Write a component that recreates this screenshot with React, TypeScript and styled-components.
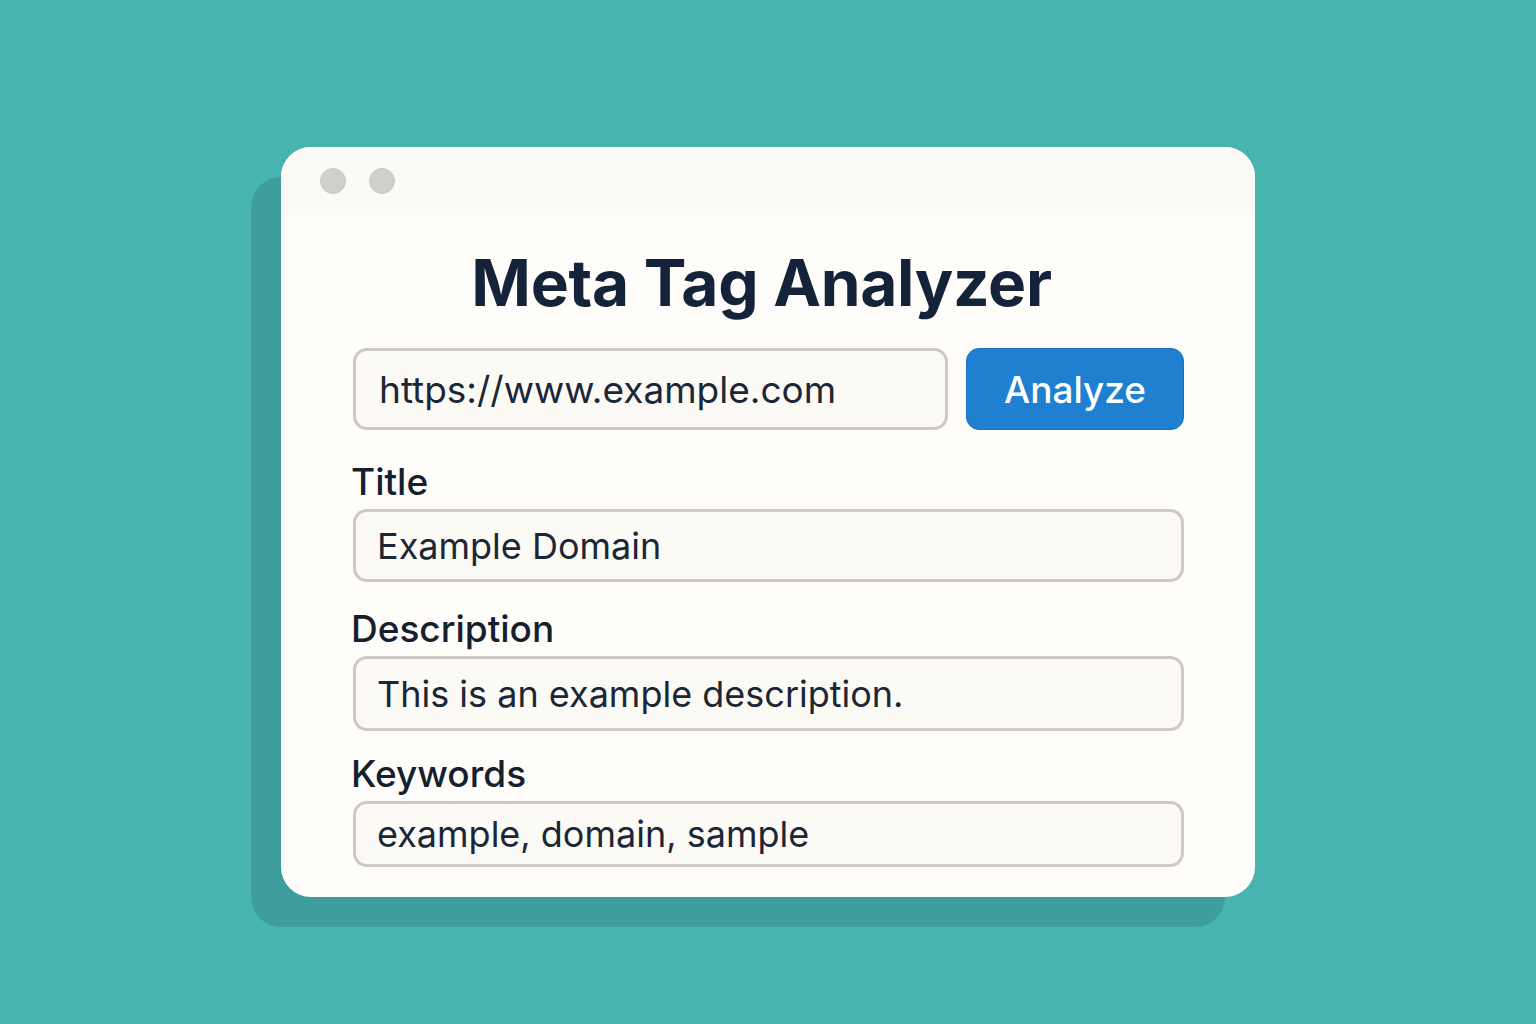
import React from "react";
import styled, { createGlobalStyle } from "styled-components";

const GlobalStyle = createGlobalStyle`
  html, body {
    margin: 0;
    padding: 0;
    background: #48b4b0;
  }
  body {
    font-family: Inter, "Noto Sans", "Liberation Sans", sans-serif;
    color: #15233a;
  }
`;

const Stage = styled.div`
  width: 1536px;
  height: 1024px;
  display: flex;
  justify-content: center;
  padding-top: 147px;
  box-sizing: border-box;
`;

const Window = styled.div`
  width: 974px;
  height: 750px;
  background: #fffdf9;
  border-radius: 30px;
  box-shadow: -30px 30px 0 #3e9e9d;
  display: flex;
  flex-direction: column;
  overflow: hidden;
`;

const TitleBar = styled.div`
  height: 68px;
  background: #fcfaf6;
  display: flex;
  align-items: center;
  gap: 23px;
  padding: 0 0 0 39px;
  flex-shrink: 0;
`;

const Dot = styled.span`
  width: 26px;
  height: 26px;
  border-radius: 50%;
  background: #d1cfcb;
  border: 1px solid #c8c6c1;
  box-sizing: border-box;
`;

const Body = styled.div`
  padding: 0 71px 0 72px;
  display: flex;
  flex-direction: column;
`;

const Heading = styled.h1`
  margin: 36px 14px 0 0;
  text-align: center;
  font-size: 64px;
  line-height: 64px;
  font-weight: 650;
  letter-spacing: -0.3px;
  color: #15233a;
`;

const UrlRow = styled.div`
  margin-top: 33px;
  display: flex;
  gap: 18px;
  height: 82px;
`;

const Field = styled.div<{ $h?: number; $grow?: boolean }>`
  flex: ${(p) => (p.$grow ? "1" : "none")};
  height: ${(p) => (p.$h ? `${p.$h}px` : "100%")};
  box-sizing: border-box;
  border: 3px solid #cdcac4;
  border-radius: 14px;
  background: #fcfaf5;
  display: flex;
  align-items: center;
  padding-left: 21px;
  font-size: 36px;
  color: #1b2636;
`;

const UrlField = styled(Field)`
  font-size: 37px;
  padding-left: 23px;
`;

const Button = styled.button`
  width: 218px;
  height: 82px;
  border: 1px solid #1a70bf;
  border-radius: 13px;
  background: #1f80d1;
  color: #ffffff;
  font-family: inherit;
  font-size: 37px;
  font-weight: 500;
  cursor: pointer;
`;

const Group = styled.div<{ $top: number }>`
  margin-top: ${(p) => p.$top}px;
  display: flex;
  flex-direction: column;
`;

const Label = styled.div`
  font-size: 37px;
  line-height: 44px;
  font-weight: 500;
  color: #15202e;
  margin: 0 0 5px -2px;
`;

const fields = [
  { label: "Title", value: "Example Domain", top: 30, h: 73 },
  { label: "Description", value: "This is an example description.", top: 25, h: 75 },
  { label: "Keywords", value: "example, domain, sample", top: 21, h: 66 },
];

export default function App() {
  return (
    <>
      <GlobalStyle />
      <Stage>
        <Window>
          <TitleBar>
            <Dot />
            <Dot />
          </TitleBar>
          <Body>
            <Heading>Meta Tag Analyzer</Heading>
            <UrlRow>
              <UrlField $grow>https://www.example.com</UrlField>
              <Button>Analyze</Button>
            </UrlRow>
            {fields.map((f) => (
              <Group key={f.label} $top={f.top}>
                <Label>{f.label}</Label>
                <Field $h={f.h}>{f.value}</Field>
              </Group>
            ))}
          </Body>
        </Window>
      </Stage>
    </>
  );
}
